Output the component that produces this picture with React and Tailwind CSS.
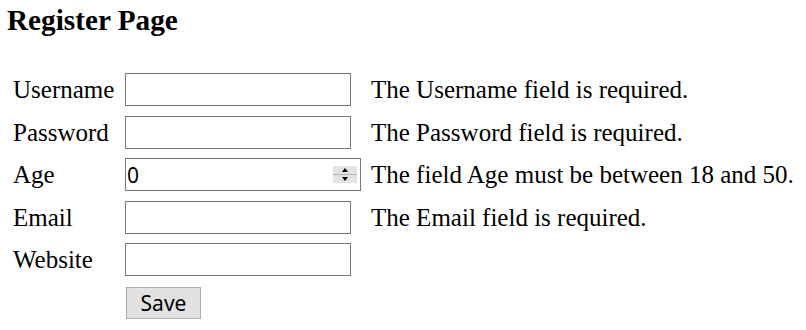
import React, { useState } from 'react';

const serif = { fontFamily: '"Liberation Serif", "Times New Roman", serif' };
const sans = { fontFamily: '"Noto Sans", "Open Sans", sans-serif' };

function Spinner() {
  return (
    <div className="pointer-events-none absolute left-[208px] top-[8px] flex h-[17px] w-[24px] flex-col">
      <div className="flex h-[8px] items-center justify-center bg-[#e3e3e3]">
        <span className="block h-0 w-0 border-x-[3.5px] border-b-[4px] border-x-transparent border-b-black" />
      </div>
      <div className="h-[1px] bg-[#b5b5b5]" />
      <div className="flex h-[8px] items-center justify-center bg-[#e3e3e3]">
        <span className="block h-0 w-0 border-x-[3.5px] border-t-[4px] border-x-transparent border-t-black" />
      </div>
    </div>
  );
}

function App() {
  const [form, setForm] = useState({
    username: '',
    password: '',
    age: '0',
    email: '',
    website: '',
  });

  const fields = [
    { key: 'username', label: 'Username', error: 'The Username field is required.' },
    { key: 'password', label: 'Password', error: 'The Password field is required.', type: 'password' },
    { key: 'age', label: 'Age', error: 'The field Age must be between 18 and 50.', number: true },
    { key: 'email', label: 'Email', error: 'The Email field is required.' },
    { key: 'website', label: 'Website', error: '' },
  ];

  const handleChange = (key) => (event) => {
    setForm((prev) => ({ ...prev, [key]: event.target.value }));
  };

  return (
    <div className="min-h-[330px] w-[806px] bg-white text-black" style={serif}>
      <h3 className="pl-[7px] pt-[5.5px] text-[29.25px] font-bold leading-none">Register Page</h3>

      <form
        className="mt-[38.25px] grid grid-cols-[112px_236px_auto] gap-y-[9.5px] pl-[13px]"
        onSubmit={(e) => e.preventDefault()}
      >
        {fields.map((field) => (
          <React.Fragment key={field.key}>
            <label className="flex h-[33px] items-center text-[25px] leading-none">{field.label}</label>
            <div className="relative h-[33px]">
              <input
                type={field.type || 'text'}
                value={form[field.key]}
                onChange={handleChange(field.key)}
                className={`h-[33px] border border-[#767676] bg-white pl-[1px] pr-[2px] text-[21px] text-black outline-none ${
                  field.number ? 'w-[236px]' : 'w-[226px]'
                }`}
                style={sans}
              />
              {field.number && <Spinner />}
            </div>
            <span className="flex h-[33px] items-center whitespace-nowrap pl-[10px] text-[25px] leading-none">
              {field.error}
            </span>
          </React.Fragment>
        ))}
        <div />
        <div className="pt-[1.5px]">
          <button
            type="submit"
            className="ml-[1px] h-[32px] w-[75px] border border-[#adadad] bg-[#e1e1e1] text-[21px] leading-none text-black"
            style={sans}
          >
            Save
          </button>
        </div>
        <div />
      </form>
    </div>
  );
}

export default App;
